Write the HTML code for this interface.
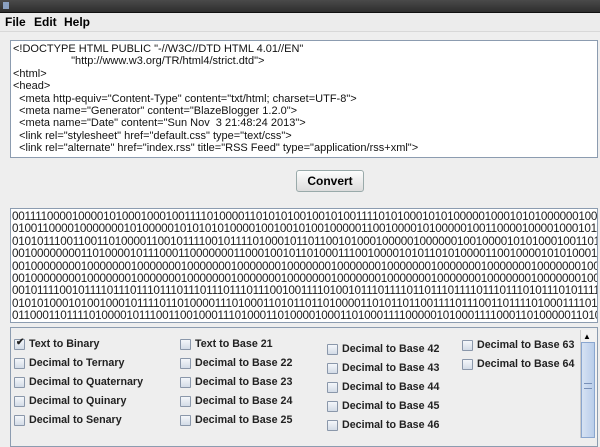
<!DOCTYPE html>
<html><head><style>
body{margin:0;width:600px;height:438px;background:#eeeeee;position:relative;overflow:hidden;font-family:"Liberation Sans",sans-serif}
.title{position:absolute;left:0;top:0;width:600px;height:12px;background:linear-gradient(#4a4a4a,#2e2e2e);border-bottom:1px solid #111}
.title i{position:absolute;left:3px;top:2px;width:6px;height:7px;background:#8aa0c0}
.menu{position:absolute;top:13px;left:0;width:600px;height:18px;background:#ececec;border-bottom:1px solid #d8d8d8;font-size:12px;font-weight:bold}
.menu span{position:absolute;top:2px}
.ta{position:absolute;left:10px;top:40px;background:#fff;border:1px solid #8c9cb0;font-size:11px;line-height:12.4px;white-space:pre;overflow:hidden;color:#111;padding:2px 0 0 2px;box-sizing:border-box;width:588px;height:118px}
.btn{position:absolute;left:296px;top:170px;width:68px;height:22px;box-sizing:border-box;border:1px solid #9aa;border-radius:3px;background:linear-gradient(#fdfdfd,#dcdcdc);font-size:12px;font-weight:bold;text-align:center;line-height:20px}
.bin{position:absolute;left:10px;top:208px;width:588px;height:115px;box-sizing:border-box;background:#fff;border:1px solid #8c9cb0;font-size:11.7px;line-height:12.4px;white-space:pre;overflow:hidden;color:#222;padding:2px 0 0 1px;letter-spacing:-0.25px}
.panel{position:absolute;left:10px;top:327px;width:588px;height:120px;box-sizing:border-box;border:1px solid #8c9cb0;background:#eeeeee}
.sb{position:absolute;left:580px;top:330px;width:16px;height:108px;background:#f2f2f2;border-left:1px solid #ccc}
.thumb{position:absolute;left:581px;top:342px;width:14px;height:96px;background:linear-gradient(90deg,#d6e2f3,#b9cdea);border:1px solid #8aa6cf;box-sizing:border-box}
.cb{position:absolute;font-size:10.7px;font-weight:bold;color:#222;white-space:nowrap}
.cb b{position:absolute;left:0;top:0;width:11px;height:11px;border:1px solid #8a97aa;background:linear-gradient(#f4f6fa,#d3dbe7);box-sizing:border-box;border-radius:1px}
.cb span{position:absolute;left:15px;top:-1px}
</style></head><body>
<div class="title"><i></i></div>
<div class="menu"><span style="left:5px">File</span><span style="left:34px">Edit</span><span style="left:64px">Help</span></div>
<div class="ta">&lt;!DOCTYPE HTML PUBLIC "-//W3C//DTD HTML 4.01//EN"
                   "http://www.w3.org/TR/html4/strict.dtd"&gt;
&lt;html&gt;
&lt;head&gt;
  &lt;meta http-equiv="Content-Type" content="txt/html; charset=UTF-8"&gt;
  &lt;meta name="Generator" content="BlazeBlogger 1.2.0"&gt;
  &lt;meta name="Date" content="Sun Nov  3 21:48:24 2013"&gt;
  &lt;link rel="stylesheet" href="default.css" type="text/css"&gt;
  &lt;link rel="alternate" href="index.rss" title="RSS Feed" type="application/rss+xml"&gt;</div>
<div class="btn">Convert</div>
<div class="bin">001111000010000101000100010011110100001101010100100101001111010100010101000001000101010000001001000000
010011000010000000101000001010101010000100100101001000001100100001010000010011000010000100010100011010000
010101110011001101000011001011110010111101000101101100101000100000100000010010000101010001001101000100110
001000000001101000010111000110000000110001001011010001110010000101011010100001100100001010100011001010001
001000000001000000010000000100000001000000010000000100000001000000010000000100000001000000010000000100001
001000000001000000010000000100000001000000010000000100000001000000010000000100000001000000010000000100000
001011110010111101110111011101110111011101110010011110100101110111101101110111101110111010111010111101110
010101000101001000101111011010000111010001101011011010000110101101100111101110011011110100011110100011110
011000110111101000010111001100100011101000110100001000110100011110000010100011110001101000001101000011010</div>
<div class="panel"></div>
<div class="sb"></div>
<div style="position:absolute;left:583px;top:332px;font-size:8px">▲</div>
<div class="thumb"></div>
<div style="position:absolute;left:584px;top:383px;width:8px;height:4px;border-top:1px solid #7890b8;border-bottom:1px solid #7890b8"></div>

<div class="cb" style="left:14px;top:339px"><b></b><span style="position:absolute;left:2px;top:-2px;font-size:10px">✔</span><span>Text to Binary</span></div>
<div class="cb" style="left:14px;top:358px"><b></b><span>Decimal to Ternary</span></div>
<div class="cb" style="left:14px;top:377px"><b></b><span>Decimal to Quaternary</span></div>
<div class="cb" style="left:14px;top:396px"><b></b><span>Decimal to Quinary</span></div>
<div class="cb" style="left:14px;top:415px"><b></b><span>Decimal to Senary</span></div>

<div class="cb" style="left:180px;top:339px"><b></b><span>Text to Base 21</span></div>
<div class="cb" style="left:180px;top:358px"><b></b><span>Decimal to Base 22</span></div>
<div class="cb" style="left:180px;top:377px"><b></b><span>Decimal to Base 23</span></div>
<div class="cb" style="left:180px;top:396px"><b></b><span>Decimal to Base 24</span></div>
<div class="cb" style="left:180px;top:415px"><b></b><span>Decimal to Base 25</span></div>

<div class="cb" style="left:327px;top:344px"><b></b><span>Decimal to Base 42</span></div>
<div class="cb" style="left:327px;top:363px"><b></b><span>Decimal to Base 43</span></div>
<div class="cb" style="left:327px;top:382px"><b></b><span>Decimal to Base 44</span></div>
<div class="cb" style="left:327px;top:401px"><b></b><span>Decimal to Base 45</span></div>
<div class="cb" style="left:327px;top:420px"><b></b><span>Decimal to Base 46</span></div>

<div class="cb" style="left:462px;top:340px"><b></b><span>Decimal to Base 63</span></div>
<div class="cb" style="left:462px;top:359px"><b></b><span>Decimal to Base 64</span></div>
</body></html>
